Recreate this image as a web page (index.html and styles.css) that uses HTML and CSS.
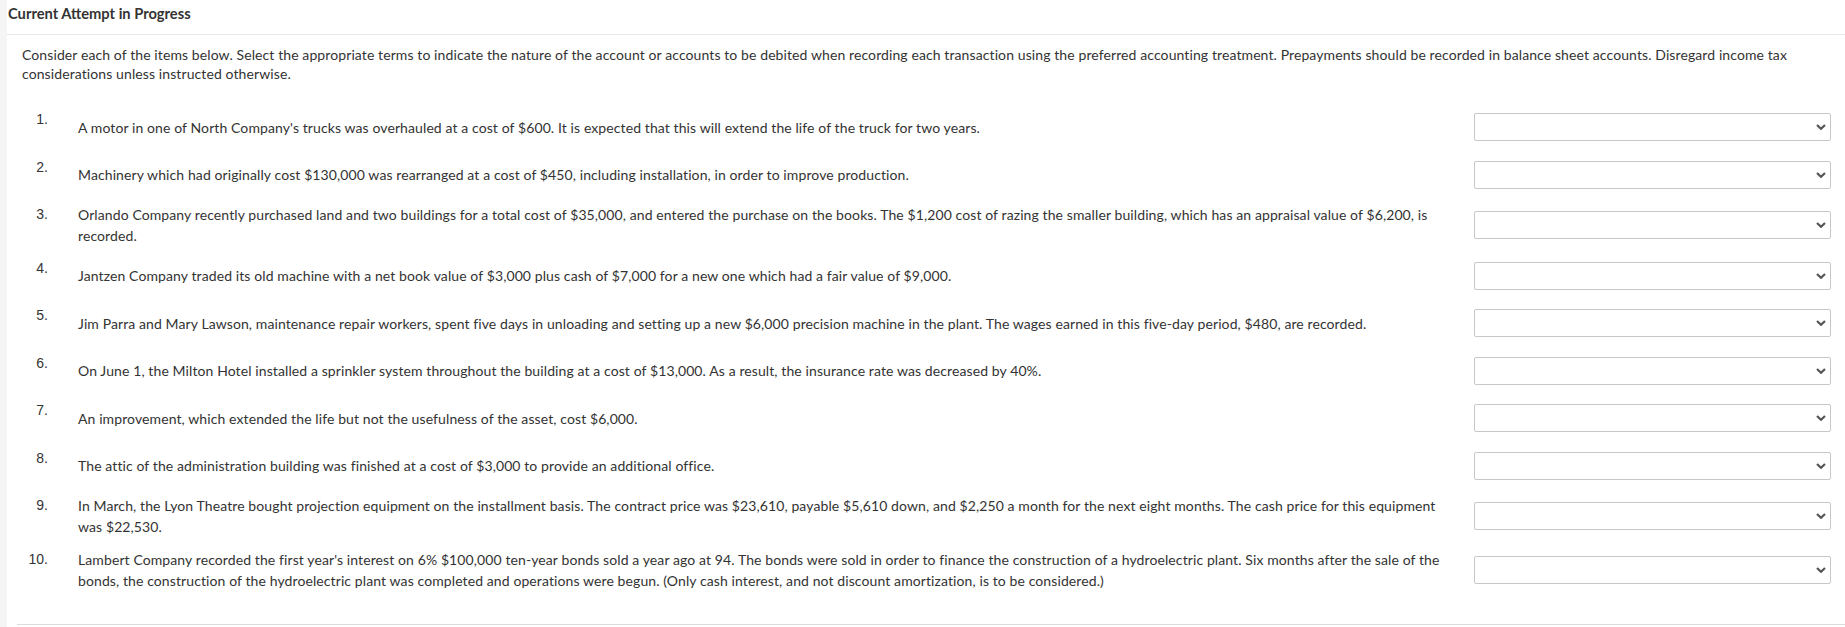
FILE: index.html
```html
<!DOCTYPE html>
<html lang="en">
<head>
<meta charset="utf-8">
<title>Current Attempt in Progress</title>
<link rel="stylesheet" href="styles.css">
</head>
<body>
<div class="wrap">
  <div class="strip"></div>
  <div class="main">
    <div class="head">Current Attempt in Progress</div>
    <div class="content">
      <p class="intro">Consider each of the items below. Select the appropriate terms to indicate the nature of the account or accounts to be debited when recording each transaction using the preferred accounting treatment. Prepayments should be recorded in balance sheet accounts. Disregard income tax considerations unless instructed otherwise.</p>
      <div class="list">
        <div class="row">
          <div class="num">1.</div>
          <div class="text">A motor in one of North Company's trucks was overhauled at a cost of $600. It is expected that this will extend the life of the truck for two years.</div>
          <div class="sel"><select></select><svg class="chev" viewBox="0 0 10 6" width="10" height="6"><path d="M1 1 L5 4.8 L9 1" fill="none" stroke="#555" stroke-width="2.2"/></svg></div>
        </div>
        <div class="row">
          <div class="num">2.</div>
          <div class="text">Machinery which had originally cost $130,000 was rearranged at a cost of $450, including installation, in order to improve production.</div>
          <div class="sel"><select></select><svg class="chev" viewBox="0 0 10 6" width="10" height="6"><path d="M1 1 L5 4.8 L9 1" fill="none" stroke="#555" stroke-width="2.2"/></svg></div>
        </div>
        <div class="row">
          <div class="num">3.</div>
          <div class="text">Orlando Company recently purchased land and two buildings for a total cost of $35,000, and entered the purchase on the books. The $1,200 cost of razing the smaller building, which has an appraisal value of $6,200, is recorded.</div>
          <div class="sel"><select></select><svg class="chev" viewBox="0 0 10 6" width="10" height="6"><path d="M1 1 L5 4.8 L9 1" fill="none" stroke="#555" stroke-width="2.2"/></svg></div>
        </div>
        <div class="row">
          <div class="num">4.</div>
          <div class="text">Jantzen Company traded its old machine with a net book value of $3,000 plus cash of $7,000 for a new one which had a fair value of $9,000.</div>
          <div class="sel"><select></select><svg class="chev" viewBox="0 0 10 6" width="10" height="6"><path d="M1 1 L5 4.8 L9 1" fill="none" stroke="#555" stroke-width="2.2"/></svg></div>
        </div>
        <div class="row">
          <div class="num">5.</div>
          <div class="text">Jim Parra and Mary Lawson, maintenance repair workers, spent five days in unloading and setting up a new $6,000 precision machine in the plant. The wages earned in this five-day period, $480, are recorded.</div>
          <div class="sel"><select></select><svg class="chev" viewBox="0 0 10 6" width="10" height="6"><path d="M1 1 L5 4.8 L9 1" fill="none" stroke="#555" stroke-width="2.2"/></svg></div>
        </div>
        <div class="row">
          <div class="num">6.</div>
          <div class="text">On June 1, the Milton Hotel installed a sprinkler system throughout the building at a cost of $13,000. As a result, the insurance rate was decreased by 40%.</div>
          <div class="sel"><select></select><svg class="chev" viewBox="0 0 10 6" width="10" height="6"><path d="M1 1 L5 4.8 L9 1" fill="none" stroke="#555" stroke-width="2.2"/></svg></div>
        </div>
        <div class="row">
          <div class="num">7.</div>
          <div class="text">An improvement, which extended the life but not the usefulness of the asset, cost $6,000.</div>
          <div class="sel"><select></select><svg class="chev" viewBox="0 0 10 6" width="10" height="6"><path d="M1 1 L5 4.8 L9 1" fill="none" stroke="#555" stroke-width="2.2"/></svg></div>
        </div>
        <div class="row">
          <div class="num">8.</div>
          <div class="text">The attic of the administration building was finished at a cost of $3,000 to provide an additional office.</div>
          <div class="sel"><select></select><svg class="chev" viewBox="0 0 10 6" width="10" height="6"><path d="M1 1 L5 4.8 L9 1" fill="none" stroke="#555" stroke-width="2.2"/></svg></div>
        </div>
        <div class="row">
          <div class="num">9.</div>
          <div class="text">In March, the Lyon Theatre bought projection equipment on the installment basis. The contract price was $23,610, payable $5,610 down, and $2,250 a month for the next eight months. The cash price for this equipment was $22,530.</div>
          <div class="sel"><select></select><svg class="chev" viewBox="0 0 10 6" width="10" height="6"><path d="M1 1 L5 4.8 L9 1" fill="none" stroke="#555" stroke-width="2.2"/></svg></div>
        </div>
        <div class="row">
          <div class="num">10.</div>
          <div class="text">Lambert Company recorded the first year's interest on 6% $100,000 ten-year bonds sold a year ago at 94. The bonds were sold in order to finance the construction of a hydroelectric plant. Six months after the sale of the bonds, the construction of the hydroelectric plant was completed and operations were begun. (Only cash interest, and not discount amortization, is to be considered.)</div>
          <div class="sel"><select></select><svg class="chev" viewBox="0 0 10 6" width="10" height="6"><path d="M1 1 L5 4.8 L9 1" fill="none" stroke="#555" stroke-width="2.2"/></svg></div>
        </div>
      </div>
    </div>
    <div class="foot"></div>
  </div>
</div>
</body>
</html>
```
FILE: styles.css
```css
html, body {
  margin: 0;
  padding: 0;
  background: #fff;
}
body {
  font-family: Lato, "Open Sans", sans-serif;
  font-size: 14px;
  color: #333;
  overflow: hidden;
}
.wrap {
  display: flex;
  min-height: 627px;
}
.strip {
  flex: none;
  width: 7px;
  background: #f5f5f5;
}
.main {
  flex: 1;
  min-width: 0;
}
.head {
  font-weight: bold;
  font-size: 14.7px;
  line-height: 18px;
  padding: 4px 0 12px 1px;
  border-bottom: 1px solid #e8e8e8;
  color: #333;
}
.content {
  padding: 0 14px 0 15px;
}
.intro {
  margin: 0;
  padding-top: 10px;
  line-height: 19px;
  letter-spacing: 0.1px;
}
.list {
  margin-top: 20px;
}
.row {
  display: flex;
  align-items: center;
  padding: 6px 0 5.5px;
}
.num {
  flex: none;
  align-self: flex-start;
  width: 26px;
  text-align: right;
  font-family: "Liberation Sans", Arial, sans-serif;
  font-size: 14px;
  line-height: 21px;
  color: #333;
}
.text {
  flex: none;
  width: 1362px;
  margin-left: 30px;
  line-height: 21px;
  letter-spacing: 0.1px;
}
.sel {
  flex: none;
  position: relative;
  width: 357px;
  height: 36px;
  margin-left: 34px;
  display: flex;
  align-items: center;
}
.sel select {
  -webkit-appearance: none;
  appearance: none;
  width: 357px;
  height: 28px;
  border: 1px solid #c8c8c8;
  border-radius: 2px;
  background: #fff;
  margin: 0;
  padding: 0 6px;
  font-family: Lato, sans-serif;
  font-size: 14px;
}
.chev {
  position: absolute;
  right: 5px;
  top: 15px;
  pointer-events: none;
}
.foot {
  margin-top: 28px;
  margin-left: 10px;
  border-top: 1px solid #dcdcdc;
}
```
